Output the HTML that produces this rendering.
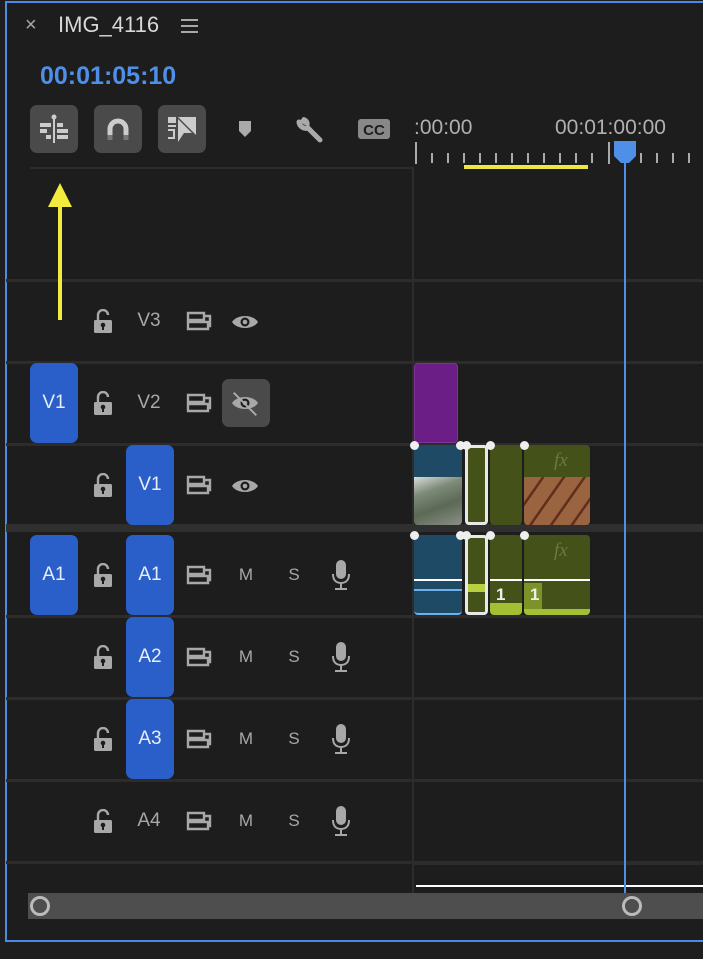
<!DOCTYPE html>
<html><head><meta charset="utf-8"><style>
*{margin:0;padding:0;box-sizing:border-box}
body{width:703px;height:959px;background:#1e1e1e;position:relative;overflow:hidden;font-family:"Liberation Sans",sans-serif}
.a{position:absolute}
.panel{left:5px;top:1px;width:710px;height:941px;border:2px solid #4a8be6;border-right:none;background:#1d1d1d}
.sep{position:absolute;left:6px;width:697px;height:3px;background:#2c2c2c}
.vl{position:absolute;left:412px;width:2px;background:#2c2c2c}
.badge{position:absolute;width:48px;height:80px;background:#2a5fc9;border-radius:7px;color:#e8eef8;font-size:19px;text-align:center;line-height:80px}
.lbl{position:absolute;color:#a8a8a8;font-size:19px;width:40px;text-align:center}
.btn{position:absolute;top:105px;width:48px;height:48px;background:#4a4a4a;border-radius:7px}
.tick{position:absolute;width:2px;background:#aaa}
.clip{position:absolute;border-radius:4px}
.dot{position:absolute;width:9px;height:9px;border-radius:50%;background:#eee}
</style></head><body>
<svg width="0" height="0" style="position:absolute"><defs>
<symbol id="lock" viewBox="0 0 20 24"><path d="M5 11V6a5 5 0 0 1 10 0" fill="none" stroke="#a8a8a8" stroke-width="2.4"/><rect x="1" y="11" width="18" height="13" rx="1.5" fill="#a8a8a8"/><circle cx="10" cy="16" r="2.3" fill="#1d1d1d"/><rect x="9" y="16" width="2" height="5" fill="#1d1d1d"/></symbol>
<symbol id="sync" viewBox="0 0 26 20"><path d="M2 2h16v7H2zM2 11h20v7H2zM18 5h6v10h-2" fill="none" stroke="#a8a8a8" stroke-width="2.4"/></symbol>
<symbol id="eye" viewBox="0 0 28 18"><path d="M1 9C6 1 22 1 27 9C22 17 6 17 1 9Z" fill="#a8a8a8"/><circle cx="14" cy="9" r="4.5" fill="#1d1d1d"/><circle cx="14" cy="9" r="2.3" fill="#a8a8a8"/></symbol>
<symbol id="mic" viewBox="0 0 20 30"><rect x="5" y="0" width="10" height="19" rx="5" fill="#a8a8a8"/><path d="M2 14c0 6 3 9 8 9s8-3 8-9M10 23v5M4 29h12" fill="none" stroke="#a8a8a8" stroke-width="2"/></symbol>
</defs></svg>
<div class="a panel"></div>

<div class="a" style="left:25px;top:14px;color:#a8a8a8;font-size:20px">×</div>
<div class="a" style="left:58px;top:12px;color:#d8d8d8;font-size:22px">IMG_4116</div>
<div class="a" style="left:181px;top:19px;width:17px;height:2px;background:#a8a8a8;box-shadow:0 6px 0 #a8a8a8,0 12px 0 #a8a8a8"></div>
<div class="a" style="left:40px;top:62px;color:#4f8fe8;font-size:25px;font-weight:bold">00:01:05:10</div>

<div class="btn" style="left:30px"><svg width="48" height="48" viewBox="0 0 48 48"><rect x="23" y="10" width="2" height="28" fill="#ccc"/><circle cx="24" cy="12" r="2.5" fill="#ccc"/><rect x="10" y="18" width="11" height="4" fill="#ccc"/><rect x="27" y="18" width="6" height="4" fill="#ccc"/><rect x="10" y="24" width="7" height="4" fill="#ccc"/><rect x="27" y="24" width="11" height="4" fill="#ccc"/><rect x="16" y="30" width="5" height="4" fill="#ccc"/><rect x="27" y="30" width="11" height="4" fill="#ccc"/></svg></div>
<div class="btn" style="left:94px"><svg width="48" height="48" viewBox="0 0 48 48"><path d="M16 35V24a8 8 0 0 1 16 0v11" fill="none" stroke="#ccc" stroke-width="5"/><rect x="13.5" y="30" width="5" height="5" fill="#777"/><rect x="29.5" y="30" width="5" height="5" fill="#777"/></svg></div>
<div class="btn" style="left:158px"><svg width="48" height="48" viewBox="0 0 48 48"><rect x="10" y="12" width="8" height="6" fill="#ccc"/><rect x="10" y="20" width="8" height="2" fill="#ccc"/><path d="M10 25h6v8h-6" fill="none" stroke="#ccc" stroke-width="2"/><path d="M20 12h18v18L20 12Z M20 14l14 14-8 0-6 9Z" fill="#ccc"/></svg></div>
<svg class="a" style="left:238px;top:120px" width="14" height="18" viewBox="0 0 14 18"><path d="M1 1h12v10l-6 6-6-6Z" fill="#aaa"/></svg>
<svg class="a" style="left:295px;top:114px" width="30" height="30" viewBox="0 0 30 30"><path d="M4 8a7 7 0 0 0 9 6l12 12" fill="none" stroke="#aaa" stroke-width="5" stroke-linecap="round"/><path d="M4 8l4-5a7 7 0 0 1 6 10" fill="#aaa"/></svg>
<svg class="a" style="left:358px;top:119px" width="32" height="20" viewBox="0 0 32 20"><rect width="32" height="20" rx="3" fill="#888"/><text x="16" y="16" font-family="Liberation Sans" font-weight="bold" font-size="15" fill="#1d1d1d" text-anchor="middle">CC</text></svg>

<div class="a" style="left:414px;top:116px;color:#b0b0b0;font-size:21px">:00:00</div>
<div class="a" style="left:555px;top:116px;color:#b0b0b0;font-size:21px">00:01:00:00</div>
<div class="tick" style="left:415px;top:142px;height:22px"></div>
<div class="tick" style="left:431px;top:153px;height:10px"></div><div class="tick" style="left:447px;top:153px;height:10px"></div><div class="tick" style="left:463px;top:153px;height:10px"></div><div class="tick" style="left:479px;top:153px;height:10px"></div><div class="tick" style="left:495px;top:153px;height:10px"></div><div class="tick" style="left:511px;top:153px;height:10px"></div><div class="tick" style="left:527px;top:153px;height:10px"></div><div class="tick" style="left:543px;top:153px;height:10px"></div><div class="tick" style="left:559px;top:153px;height:10px"></div><div class="tick" style="left:575px;top:153px;height:10px"></div><div class="tick" style="left:591px;top:153px;height:10px"></div>
<div class="tick" style="left:608px;top:142px;height:22px"></div>
<div class="tick" style="left:640px;top:153px;height:10px"></div><div class="tick" style="left:656px;top:153px;height:10px"></div><div class="tick" style="left:672px;top:153px;height:10px"></div><div class="tick" style="left:688px;top:153px;height:10px"></div>
<div class="a" style="left:464px;top:165px;width:124px;height:4px;background:#eee642"></div>

<div class="a" style="left:30px;top:167px;width:382px;height:2px;background:#2c2c2c"></div>
<div class="vl" style="top:167px;height:727px"></div>
<div class="sep" style="top:279px"></div>
<div class="sep" style="top:361px"></div>
<div class="sep" style="top:443px"></div>
<div class="sep" style="top:524px;height:8px;background:#2f2f2f"></div>
<div class="sep" style="top:615px"></div>
<div class="sep" style="top:697px"></div>
<div class="sep" style="top:779px"></div>
<div class="sep" style="top:861px"></div>
<div class="a" style="left:414px;top:861px;width:289px;height:4px;background:#2c2c2c"></div>

<div class="a" style="left:58px;top:200px;width:4px;height:120px;background:#f2ec3c"></div>
<svg class="a" style="left:47px;top:182px" width="26" height="26"><path d="M13 1L1 25h24Z" fill="#f2ec3c"/></svg>

<div class="badge" style="left:30px;top:363px">V1</div>
<div class="badge" style="left:126px;top:445px">V1</div>
<div class="badge" style="left:30px;top:535px">A1</div>
<div class="badge" style="left:126px;top:535px">A1</div>
<div class="badge" style="left:126px;top:617px">A2</div>
<div class="badge" style="left:126px;top:699px">A3</div>

<svg class="a" style="left:93px;top:309px" width="20" height="24"><use href="#lock"/></svg>
<div class="lbl" style="left:129px;top:310px">V3</div>
<svg class="a" style="left:186px;top:311px" width="26" height="20"><use href="#sync"/></svg>
<svg class="a" style="left:231px;top:313px" width="28" height="18"><use href="#eye"/></svg>
<svg class="a" style="left:93px;top:391px" width="20" height="24"><use href="#lock"/></svg>
<div class="lbl" style="left:129px;top:392px">V2</div>
<svg class="a" style="left:186px;top:393px" width="26" height="20"><use href="#sync"/></svg>
<div class="a" style="left:222px;top:379px;width:48px;height:48px;background:#4a4a4a;border-radius:7px"></div>
<svg class="a" style="left:231px;top:394px" width="28" height="18"><use href="#eye"/></svg>
<div class="a" style="left:244px;top:388px;width:2px;height:32px;background:#aaa;transform:rotate(-45deg)"></div>
<svg class="a" style="left:93px;top:473px" width="20" height="24"><use href="#lock"/></svg>
<svg class="a" style="left:186px;top:475px" width="26" height="20"><use href="#sync"/></svg>
<svg class="a" style="left:231px;top:477px" width="28" height="18"><use href="#eye"/></svg>

<svg class="a" style="left:93px;top:563px" width="20" height="24"><use href="#lock"/></svg>
<svg class="a" style="left:186px;top:565px" width="26" height="20"><use href="#sync"/></svg>
<div class="lbl" style="left:226px;top:565px;font-size:17px">M</div><div class="lbl" style="left:274px;top:565px;font-size:17px">S</div>
<svg class="a" style="left:331px;top:560px" width="20" height="30"><use href="#mic"/></svg>

<svg class="a" style="left:93px;top:645px" width="20" height="24"><use href="#lock"/></svg>
<svg class="a" style="left:186px;top:647px" width="26" height="20"><use href="#sync"/></svg>
<div class="lbl" style="left:226px;top:647px;font-size:17px">M</div><div class="lbl" style="left:274px;top:647px;font-size:17px">S</div>
<svg class="a" style="left:331px;top:642px" width="20" height="30"><use href="#mic"/></svg>

<svg class="a" style="left:93px;top:727px" width="20" height="24"><use href="#lock"/></svg>
<svg class="a" style="left:186px;top:729px" width="26" height="20"><use href="#sync"/></svg>
<div class="lbl" style="left:226px;top:729px;font-size:17px">M</div><div class="lbl" style="left:274px;top:729px;font-size:17px">S</div>
<svg class="a" style="left:331px;top:724px" width="20" height="30"><use href="#mic"/></svg>

<svg class="a" style="left:93px;top:809px" width="20" height="24"><use href="#lock"/></svg>
<div class="lbl" style="left:129px;top:810px">A4</div>
<svg class="a" style="left:186px;top:811px" width="26" height="20"><use href="#sync"/></svg>
<div class="lbl" style="left:226px;top:811px;font-size:17px">M</div><div class="lbl" style="left:274px;top:811px;font-size:17px">S</div>
<svg class="a" style="left:331px;top:806px" width="20" height="30"><use href="#mic"/></svg>

<div class="clip" style="left:414px;top:363px;width:44px;height:80px;background:#6b1e85;border:1px solid #7f3399"></div>
<div class="clip" style="left:414px;top:445px;width:48px;height:80px;background:#1f4a66;overflow:hidden"><div style="position:absolute;top:32px;left:0;width:48px;height:48px;background:linear-gradient(160deg,#dcdcdc 0,#7d8a78 30%,#5b6955 60%,#8a8f86 100%)"></div></div>
<div class="clip" style="left:465px;top:445px;width:23px;height:80px;background:#44521a;border:3px solid #e8e8e8"></div>
<div class="clip" style="left:490px;top:445px;width:32px;height:80px;background:#44521a"></div>
<div class="clip" style="left:524px;top:445px;width:66px;height:80px;background:#44521a;overflow:hidden"><div style="position:absolute;top:32px;width:66px;height:48px;background:repeating-linear-gradient(125deg,#9a6440 0,#9a6440 14px,#5e2e1a 15px,#5e2e1a 17px)"></div><div style="position:absolute;left:30px;top:5px;color:#6c7a3a;font-style:italic;font-size:19px;font-family:'Liberation Serif',serif">fx</div></div>

<div class="clip" style="left:414px;top:535px;width:48px;height:80px;background:#1f4a66;border-bottom:2px solid #6db0ee"><div style="position:absolute;top:44px;width:48px;height:2px;background:#fff"></div><div style="position:absolute;top:54px;width:48px;height:2px;background:#6db0ee"></div></div>
<div class="clip" style="left:465px;top:535px;width:23px;height:80px;background:#44521a;border:3px solid #e8e8e8"><div style="position:absolute;top:46px;width:17px;height:8px;background:#b8d040"></div></div>
<div class="clip" style="left:490px;top:535px;width:32px;height:80px;background:#44521a;overflow:hidden"><div style="position:absolute;top:44px;width:32px;height:2px;background:#fff"></div><div style="position:absolute;bottom:0;width:32px;height:12px;background:#a4bf33"></div><div style="position:absolute;left:6px;top:50px;color:#eee;font-size:17px;font-weight:bold">1</div></div>
<div class="clip" style="left:524px;top:535px;width:66px;height:80px;background:#44521a;overflow:hidden"><div style="position:absolute;top:44px;width:66px;height:2px;background:#fff"></div><div style="position:absolute;bottom:0;width:66px;height:6px;background:#a4bf33"></div><div style="position:absolute;left:0;top:48px;width:18px;height:30px;background:#a4bf33;opacity:.6"></div><div style="position:absolute;left:6px;top:50px;color:#eee;font-size:17px;font-weight:bold">1</div><div style="position:absolute;left:30px;top:5px;color:#6c7a3a;font-style:italic;font-size:19px;font-family:'Liberation Serif',serif">fx</div></div>

<div class="dot" style="left:410px;top:441px"></div><div class="dot" style="left:456px;top:441px"></div><div class="dot" style="left:462px;top:441px"></div><div class="dot" style="left:486px;top:441px"></div><div class="dot" style="left:520px;top:441px"></div>
<div class="dot" style="left:410px;top:531px"></div><div class="dot" style="left:456px;top:531px"></div><div class="dot" style="left:462px;top:531px"></div><div class="dot" style="left:486px;top:531px"></div><div class="dot" style="left:520px;top:531px"></div>

<div class="a" style="left:416px;top:885px;width:287px;height:2px;background:#fff"></div>

<div class="a" style="left:624px;top:150px;width:2px;height:745px;background:#4f8fe8"></div>
<svg class="a" style="left:614px;top:141px" width="22" height="24"><path d="M0 0h22v15l-7 7h-8l-7-7Z" fill="#4f8fe8"/></svg>

<div class="a" style="left:28px;top:893px;width:675px;height:26px;background:#4e4e4e"></div>
<div class="a" style="left:30px;top:896px;width:20px;height:20px;border:3px solid #bbb;border-radius:50%"></div>
<div class="a" style="left:622px;top:896px;width:20px;height:20px;border:3px solid #bbb;border-radius:50%"></div>
</body></html>
